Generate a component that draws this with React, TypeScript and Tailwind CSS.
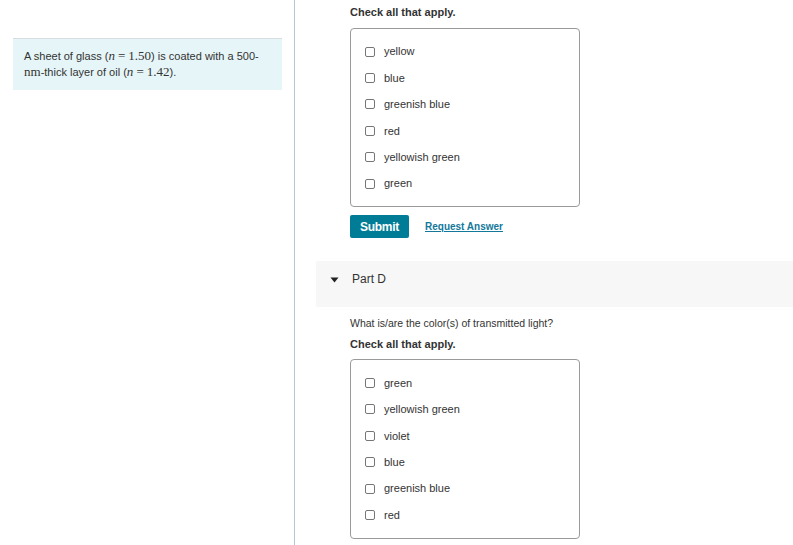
const first = ["yellow", "blue", "greenish blue", "red", "yellowish green", "green"];
const second = ["green", "yellowish green", "violet", "blue", "greenish blue", "red"];

const Options = (props: { items: string[] }) => {
    return (
        <div className="w-[230px] rounded-[4px] border border-[#9a9a9a] py-[9.5px] px-[14px]">
            {props.items.map((item, index) => (
                <label key={`${item}_${index}`} className="flex h-[26.4px] items-center">
                    <span className="h-[10px] w-[10px] rounded-[2px] border border-[#767676] bg-white" />
                    <span className="ml-[9px] text-[11px] text-[#333]">{item}</span>
                </label>
            ))}
        </div>
    );
};

const M = (props: { children: React.ReactNode; italic?: boolean }) => (
    <span className={`font-['Liberation_Serif','DejaVu_Serif',serif] text-[13px] ${props.italic ? "italic" : ""}`}>
        {props.children}
    </span>
);

export default function App() {
    return (
        <div className="flex min-h-[545px] w-[793px] bg-white font-['Liberation_Sans',Arial,sans-serif] text-[#333]">
            <div className="w-[295px] shrink-0 border-r border-[#b5c8d6] pt-[38px] pl-[13px] pr-[12px]">
                <div className="border-t border-[#d9dde0] bg-[#e6f5f7] px-[11px] pt-[9px] pb-[10px] text-[11px] leading-[15px]">
                    A sheet of glass (<M italic>n</M> <M>=</M> <M>1.50</M>) is coated with a 500-
                    <br />
                    <M>nm</M>-thick layer of oil (<M italic>n</M> <M>=</M> <M>1.42</M>).
                </div>
            </div>
            <div className="flex-1 pl-[21px]">
                <div className="pl-[34px]">
                    <p className="pt-[5px] text-[11px] font-bold leading-[14px] text-[#333]">Check all that apply.</p>
                    <div className="mt-[9px]">
                        <Options items={first} />
                    </div>
                    <div className="mt-[8px] flex items-center">
                        <button className="h-[23px] w-[59px] rounded-[2px] bg-[#007c97] text-[12px] font-bold tracking-[-0.3px] text-white">
                            Submit
                        </button>
                        <a className="ml-[16px] text-[10px] font-bold text-[#14789b] underline">Request Answer</a>
                    </div>
                </div>
                <div className="mt-[23px] flex h-[46px] items-start bg-[#f7f7f7] pl-[14px] pt-[11px]">
                    <svg width="9" height="6" viewBox="0 0 9 6" className="mt-[5px]">
                        <path d="M0.5 0.5 L8.5 0.5 L4.5 5.5 Z" fill="#222" />
                    </svg>
                    <span className="ml-[13px] text-[12px] leading-[15px] text-[#333]">Part D</span>
                </div>
                <div className="pl-[34px]">
                    <p className="mt-[9px] text-[10.5px] leading-[14px] text-[#333]">What is/are the color(s) of transmitted light?</p>
                    <p className="mt-[7px] text-[11px] font-bold leading-[14px] text-[#333]">Check all that apply.</p>
                    <div className="mt-[8px]">
                        <Options items={second} />
                    </div>
                </div>
            </div>
        </div>
    );
}
